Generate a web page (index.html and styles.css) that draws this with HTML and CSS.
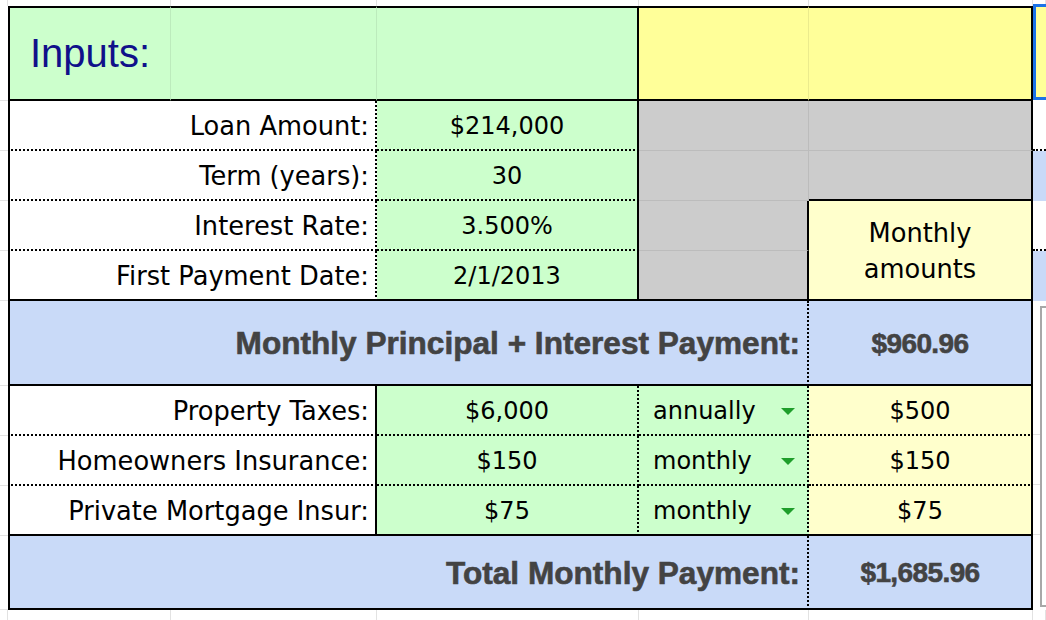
FILE: index.html
```html
<!DOCTYPE html>
<html lang="en">
<head>
<meta charset="utf-8">
<title>Mortgage Inputs</title>
<link rel="stylesheet" href="styles.css">
</head>
<body>
<div class="sheet">
  <!-- top strip -->
  <div class="edge-top"></div><div class="edge-top"></div><div class="edge-top"></div><div class="edge-top"></div><div class="edge-top"></div><div class="edge-top"></div><div class="edge-top"></div>

  <!-- header row -->
  <div class="edge-left"></div>
  <div class="cell hd green first faint-r"><span class="title">Inputs:</span></div>
  <div class="cell hd green faint-r"></div>
  <div class="cell hd green thick-r"></div>
  <div class="cell hd yellow faint-r"></div>
  <div class="cell hd yellow thick-r"></div>
  <div class="cell selected"></div>

  <!-- Loan Amount -->
  <div class="edge-left"></div>
  <div class="cell label span2 first dot-r dot-b">Loan Amount:</div>
  <div class="cell value green thick-r dot-b">$214,000</div>
  <div class="cell grey faint-r faint-b"></div>
  <div class="cell grey thick-r faint-b"></div>
  <div class="cell white dot-b"></div>

  <!-- Term -->
  <div class="edge-left"></div>
  <div class="cell label span2 first dot-r dot-b">Term (years):</div>
  <div class="cell value green thick-r dot-b">30</div>
  <div class="cell grey faint-r faint-b"></div>
  <div class="cell grey thick-r thick-b"></div>
  <div class="cell blue"></div>

  <!-- Interest Rate -->
  <div class="edge-left"></div>
  <div class="cell label span2 first dot-r dot-b">Interest Rate:</div>
  <div class="cell value green thick-r dot-b">3.500%</div>
  <div class="cell grey thick-r faint-b"></div>
  <div class="cell monthly pale thick-r thick-b">Monthly<br>amounts</div>
  <div class="cell white dot-b"></div>

  <!-- First Payment Date -->
  <div class="edge-left"></div>
  <div class="cell label span2 first dot-r thick-b">First Payment Date:</div>
  <div class="cell value green thick-r thick-b">2/1/2013</div>
  <div class="cell grey thick-r thick-b"></div>
  <div class="cell blue"></div>

  <!-- Monthly P+I -->
  <div class="edge-left"></div>
  <div class="cell label span4 first total dot-r thick-b">Monthly Principal + Interest Payment:</div>
  <div class="cell value total thick-r thick-b">$960.96</div>
  <div class="cell side"><div class="object"></div></div>

  <!-- Property Taxes -->
  <div class="edge-left"></div>
  <div class="cell label span2 first thick-r dot-b">Property Taxes:</div>
  <div class="cell value green dot-r dot-b">$6,000</div>
  <div class="cell drop green dot-r dot-b"><span>annually</span><svg class="arrow" viewBox="0 0 14 7" width="14" height="7"><path d="M0 0H14L7 7Z"/></svg></div>
  <div class="cell value pale thick-r dot-b">$500</div>

  <!-- Homeowners Insurance -->
  <div class="edge-left"></div>
  <div class="cell label span2 first thick-r dot-b">Homeowners Insurance:</div>
  <div class="cell value green dot-r dot-b">$150</div>
  <div class="cell drop green dot-r dot-b"><span>monthly</span><svg class="arrow" viewBox="0 0 14 7" width="14" height="7"><path d="M0 0H14L7 7Z"/></svg></div>
  <div class="cell value pale thick-r dot-b">$150</div>

  <!-- PMI -->
  <div class="edge-left"></div>
  <div class="cell label span2 first thick-r thick-b">Private Mortgage Insur:</div>
  <div class="cell value green dot-r thick-b">$75</div>
  <div class="cell drop green dot-r thick-b"><span>monthly</span><svg class="arrow" viewBox="0 0 14 7" width="14" height="7"><path d="M0 0H14L7 7Z"/></svg></div>
  <div class="cell value pale thick-r thick-b">$75</div>

  <!-- Total -->
  <div class="edge-left"></div>
  <div class="cell label span4 first total dot-r thick-b">Total Monthly Payment:</div>
  <div class="cell value total thick-r thick-b">$1,685.96</div>

  <!-- bottom strip -->
  <div class="edge-bottom"></div><div class="edge-bottom"></div><div class="edge-bottom"></div><div class="edge-bottom"></div><div class="edge-bottom"></div><div class="edge-bottom"></div><div class="edge-bottom"></div>
</div>
</body>
</html>
```

FILE: styles.css
```css
* { box-sizing: border-box; }

html, body {
  margin: 0;
  padding: 0;
  background: #fff;
  overflow: hidden;
}

.sheet {
  width: 1046px;
  height: 620px;
  display: grid;
  grid-template-columns: 8px 163px 206px 262px 170px 224px 1fr;
  grid-template-rows: 6px 95px 50px 50px 50px 50px 85px 50px 50px 50px 74px 1fr;
  font-family: "DejaVu Sans", "Noto Sans", sans-serif;
  font-size: 25.7px;
  color: #000;
}

/* sheet gridlines outside the table */
.edge-top { border-right: 1px solid #e2e2e2; }
.edge-left { border-bottom: 1px solid #e2e2e2; }
.edge-bottom { border-right: 1px solid #e2e2e2; }

.cell {
  display: flex;
  align-items: center;
  min-width: 0;
  white-space: nowrap;
}

.first { border-left: 2px solid #000; }
.hd { border-top: 2px solid #000; border-bottom: 2px solid #000; }

.thick-r { border-right: 2px solid #000; }
.thick-b { border-bottom: 2px solid #000; }
.dot-r { border-right: 2px dotted #000; }
.dot-b { border-bottom: 2px dotted #000; }
.faint-r { border-right: 1px solid rgba(0, 0, 0, 0.08); }
.faint-b { border-bottom: 1px solid rgba(0, 0, 0, 0.08); }

.green { background: #ccffcc; }
.yellow { background: #ffff99; }
.grey { background: #cccccc; }
.pale { background: #ffffcc; }
.blue { background: #c9daf8; }
.white { background: #fff; }

.title {
  font-family: "Liberation Sans", Arial, sans-serif;
  font-size: 40px;
  color: #10108a;
  padding-left: 20px;
}

.selected {
  background: #ffff99;
  border: 3px solid #1a73e8;
  border-right: none;
  margin-top: -2px;
  margin-bottom: 1px;
}

.label {
  justify-content: flex-end;
  padding-right: 6px;
  padding-top: 2px;
  background: #fff;
}
.span2 { grid-column: span 2; }
.span4 { grid-column: span 4; }

.value {
  justify-content: center;
  font-size: 24px;
  padding-top: 2px;
}

.monthly {
  grid-row: span 2;
  justify-content: center;
  text-align: center;
  line-height: 36px;
  white-space: normal;
  padding-top: 2px;
}

.drop {
  justify-content: space-between;
  padding: 2px 12px 0 14px;
  font-size: 24px;
}
.arrow { display: block; fill: #1e9e2a; }

.total {
  background: #c9daf8;
  font-family: "Liberation Sans", Arial, sans-serif;
  font-weight: 700;
  font-size: 31.6px;
  color: #434343;
  padding-top: 2px;
  -webkit-text-stroke: 0.6px #434343;
}
.label.total { padding-right: 7px; }
.value.total { font-size: 28px; letter-spacing: -0.6px; }

/* the column right of the table: gridlines + an embedded object */
.side {
  grid-row: span 5;
  align-items: stretch;
  background:
    linear-gradient(#e2e2e2, #e2e2e2) 0 133px / 100% 1px no-repeat,
    linear-gradient(#e2e2e2, #e2e2e2) 0 183px / 100% 1px no-repeat,
    linear-gradient(#e2e2e2, #e2e2e2) 0 233px / 100% 1px no-repeat,
    #fff;
}

.object {
  flex: 1;
  margin: 5px 0 3px 7px;
  border: 2px solid #a8a8a8;
  border-right: none;
  background: #fff;
}
```
